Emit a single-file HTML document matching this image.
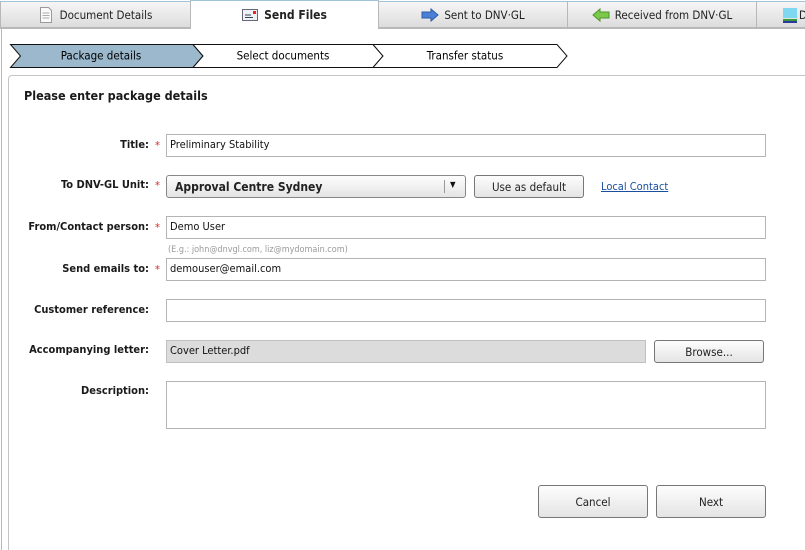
<!DOCTYPE html>
<html style="height:550px;overflow:hidden"><head><meta charset="utf-8"><style>
html,body{overflow:hidden}
body{margin:0;width:805px;height:550px;overflow:hidden;background:#fff;font-family:"DejaVu Sans Condensed","DejaVu Sans","Liberation Sans",sans-serif;font-size:11px;color:#111;position:relative}
.a{position:absolute}
.tab{position:absolute;top:1px;height:27px;background:linear-gradient(#f6f6f6,#dcdcdc);border:1px solid #b8b8b8;border-top:1px solid #9fc3d8;box-sizing:border-box;display:flex;align-items:center;justify-content:center;font-size:11.5px;color:#222}
.tab.act{background:#fff;top:0;height:29px;border-bottom:none;font-weight:bold;font-size:12px}
.lbl{position:absolute;right:656px;font-weight:bold;font-size:11px;color:#1a1a1a;text-align:right;white-space:nowrap}
.star{position:absolute;left:155px;color:#d22;font-size:11px}
.inp{position:absolute;left:166px;width:600px;height:23px;border:1px solid #b4b4b4;box-sizing:border-box;padding:3px 3px;font-size:11px;background:#fff}
.btn{position:absolute;border:1px solid #777;border-radius:3px;background:linear-gradient(#fdfdfd,#e4e4e4);box-sizing:border-box;display:flex;align-items:center;justify-content:center;font-size:11.5px;color:#222}
</style></head><body>
<div class="a" style="left:0;top:28px;width:805px;height:1px;background:#b8b8b8"></div>
<div class="a" style="left:1px;top:28px;width:1px;height:522px;background:#b8b8b8"></div>
<div class="tab" style="left:0;width:191px"><svg width="14" height="16" style="margin-right:7px"><path d="M1.5 .5h8l3 3v12h-11z" fill="#fafafa" stroke="#999"/><path d="M3.5 6h7M3.5 8.5h7M3.5 11h7" stroke="#aaa"/></svg>Document Details</div>
<div class="tab act" style="left:190px;width:189px"><svg width="16" height="12" style="margin-right:6px"><rect x=".5" y=".5" width="15" height="11" fill="#eef2f6" stroke="#667"/><path d="M3 6h6M3 8.5h8" stroke="#345"/><rect x="11" y="2" width="3" height="3" fill="#e22"/></svg>Send Files</div>
<div class="tab" style="left:378px;width:190px"><svg width="18" height="14" style="margin-right:5px"><path d="M1 4h9V1l7 6-7 6V10H1z" fill="#4a7fd6" stroke="#2c5aa8"/></svg>Sent to DNV·GL</div>
<div class="tab" style="left:567px;width:190px"><svg width="18" height="14" style="margin-right:5px"><path d="M17 4H8V1L1 7l7 6V10h9z" fill="#7cc84a" stroke="#4c962a"/></svg>Received from DNV·GL</div>
<div class="tab" style="left:756px;width:60px;justify-content:flex-start;padding-left:26px"><svg width="14" height="16" style="margin-right:2px"><rect x="0" y="1" width="14" height="10" fill="#7fd8f0"/><rect x="0" y="12" width="14" height="2" fill="#3a9a3a"/><rect x="0" y="14" width="14" height="2" fill="#2a3a9a"/></svg>D</div>
<svg class="a" style="left:0;top:40px" width="805" height="32">
<path d="M10.5 4.5H193l10 11.5-10 11.5H10.5l10-11.5z" fill="#9cb8cc" stroke="#111"/>
<path d="M193 4.5H373l10 11.5-10 11.5H193l10-11.5z" fill="#fff" stroke="#111"/>
<path d="M373 4.5H557l10 11.5-10 11.5H373l10-11.5z" fill="#fff" stroke="#111"/>
<text x="101" y="19.5" text-anchor="middle" font-size="11.5" font-family="DejaVu Sans Condensed,DejaVu Sans,sans-serif">Package details</text>
<text x="283" y="19.5" text-anchor="middle" font-size="11.5" font-family="DejaVu Sans Condensed,DejaVu Sans,sans-serif">Select documents</text>
<text x="465" y="19.5" text-anchor="middle" font-size="11.5" font-family="DejaVu Sans Condensed,DejaVu Sans,sans-serif">Transfer status</text>
</svg>
<div class="a" style="left:8px;top:75px;width:810px;height:490px;border:1px solid #c4c4c4;border-radius:4px;box-sizing:border-box"></div>
<div class="a" style="left:24px;top:88px;font-weight:bold;font-size:12.5px;color:#1a1a1a">Please enter package details</div>

<div class="lbl" style="top:138px">Title:</div><div class="star" style="top:139px">*</div>
<div class="inp" style="top:134px">Preliminary Stability</div>

<div class="lbl" style="top:178px">To DNV-GL Unit:</div><div class="star" style="top:179px">*</div>
<div class="btn" style="left:166px;top:175px;width:300px;height:23px;justify-content:flex-start;padding-left:8px;font-weight:bold;font-size:12px;border-color:#888">Approval Centre Sydney</div>
<div class="a" style="left:444px;top:180px;width:1px;height:13px;background:#999"></div>
<div class="a" style="left:450px;top:180px;font-size:8px">▼</div>
<div class="btn" style="left:474px;top:175px;width:110px;height:23px">Use as default</div>
<div class="a" style="left:601px;top:180px;color:#1a4fa0;text-decoration:underline">Local Contact</div>

<div class="lbl" style="top:220px">From/Contact person:</div><div class="star" style="top:221px">*</div>
<div class="inp" style="top:216px">Demo User</div>
<div class="a" style="left:168px;top:245px;font-size:9px;color:#999">(E.g.: john@dnvgl.com, liz@mydomain.com)</div>

<div class="lbl" style="top:262px">Send emails to:</div><div class="star" style="top:263px">*</div>
<div class="inp" style="top:258px">demouser@email.com</div>

<div class="lbl" style="top:303px">Customer reference:</div>
<div class="inp" style="top:299px"></div>

<div class="lbl" style="top:343px">Accompanying letter:</div>
<div class="inp" style="top:340px;width:480px;background:#dcdcdc;border-color:#c0c0c0">Cover Letter.pdf</div>
<div class="btn" style="left:654px;top:340px;width:110px;height:23px">Browse...</div>

<div class="lbl" style="top:384px">Description:</div>
<div class="inp" style="top:381px;height:48px"></div>

<div class="btn" style="left:538px;top:485px;width:110px;height:33px">Cancel</div>
<div class="btn" style="left:656px;top:485px;width:110px;height:33px">Next</div>
</body></html>
